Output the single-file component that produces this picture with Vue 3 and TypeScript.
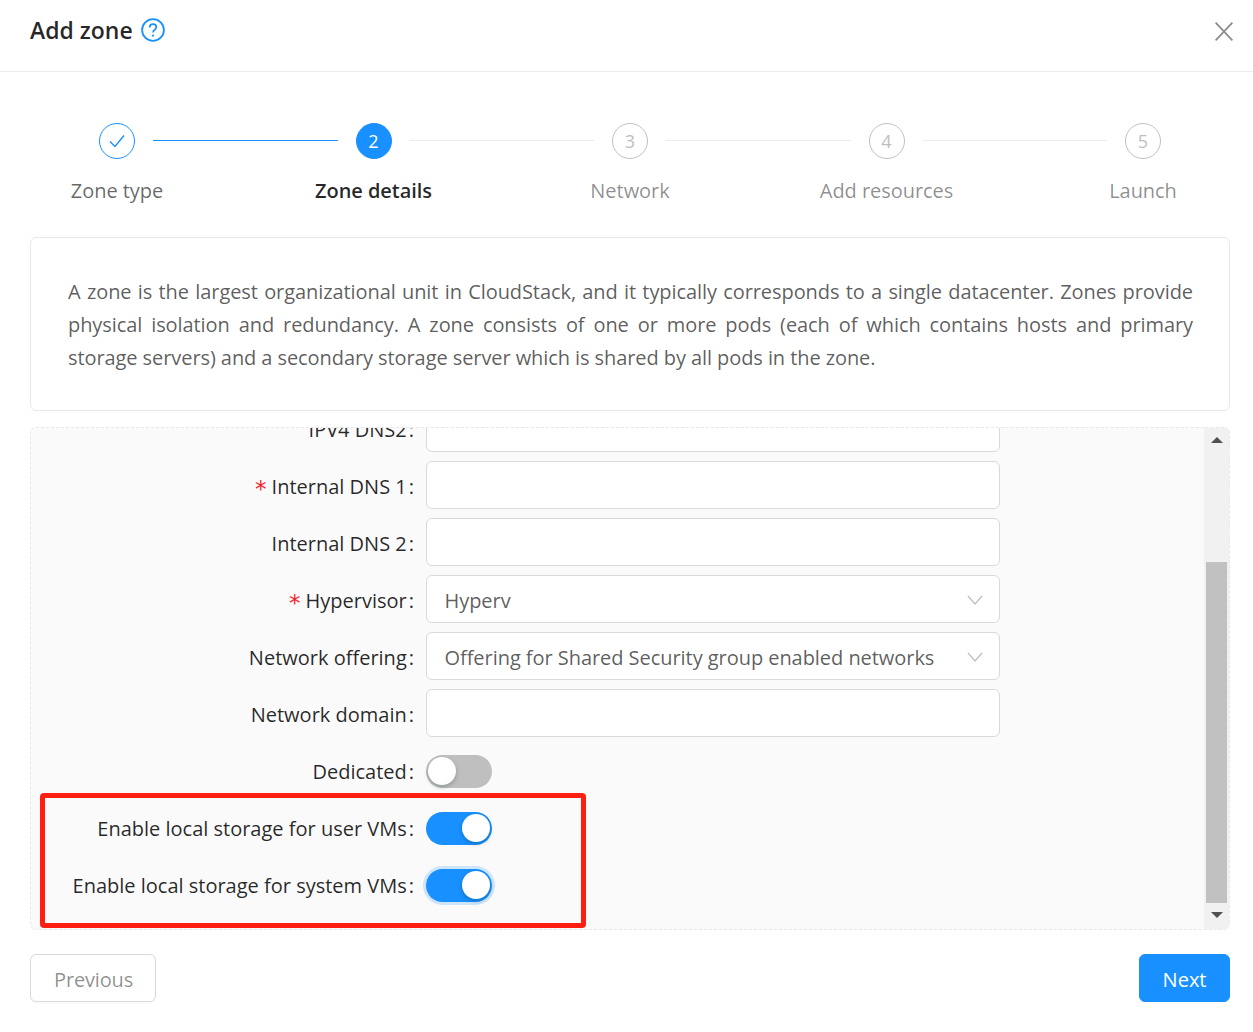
<script setup lang="ts">
interface Step {
  title: string
  state: 'done' | 'active' | 'wait'
}

interface Row {
  label: string
  required?: boolean
  kind: 'input' | 'select' | 'switch'
  value?: string
  on?: boolean
  focused?: boolean
}

const steps: Step[] = [
  { title: 'Zone type', state: 'done' },
  { title: 'Zone details', state: 'active' },
  { title: 'Network', state: 'wait' },
  { title: 'Add resources', state: 'wait' },
  { title: 'Launch', state: 'wait' },
]

const rows: Row[] = [
  { label: 'IPV4 DNS2', kind: 'input' },
  { label: 'Internal DNS 1', required: true, kind: 'input' },
  { label: 'Internal DNS 2', kind: 'input' },
  { label: 'Hypervisor', required: true, kind: 'select', value: 'Hyperv' },
  { label: 'Network offering', kind: 'select', value: 'Offering for Shared Security group enabled networks' },
  { label: 'Network domain', kind: 'input' },
  { label: 'Dedicated', kind: 'switch', on: false },
  { label: 'Enable local storage for user VMs', kind: 'switch', on: true },
  { label: 'Enable local storage for system VMs', kind: 'switch', on: true, focused: true },
]
</script>

<template>
  <div class="modal">
    <header class="head">
      <div class="title">
        Add zone
        <svg class="help" viewBox="0 0 24 24" width="24" height="24">
          <circle cx="12" cy="12" r="10.9" fill="none" stroke="#1890ff" stroke-width="1.8" />
          <path d="M8.7 9.4c0-1.9 1.5-3.2 3.3-3.2s3.3 1.2 3.3 3c0 2.5-3.3 2.6-3.3 5.2" fill="none" stroke="#1890ff" stroke-width="1.7" />
          <circle cx="12" cy="17.6" r="1.1" fill="#1890ff" />
        </svg>
      </div>
      <svg class="close" viewBox="0 0 18 19" width="18" height="19">
        <path d="M.6.6l16.8 17.8M17.4.6L.6 18.4" stroke="#8c8c8c" stroke-width="1.8" fill="none" />
      </svg>
    </header>

    <div class="body">
      <div class="steps">
        <template v-for="(step, i) in steps" :key="step.title">
          <div class="step" :class="step.state">
            <div class="dot">
              <svg v-if="step.state === 'done'" viewBox="0 0 16 14" width="16" height="14">
                <path d="M1 7.5l5 5L15 1.5" stroke="#1890ff" stroke-width="1.4" fill="none" />
              </svg>
              <span v-else>{{ i + 1 }}</span>
            </div>
            <div class="step-title">{{ step.title }}</div>
          </div>
          <div v-if="i < steps.length - 1" class="line" :class="{ passed: step.state === 'done' }"></div>
        </template>
      </div>

      <div class="desc">
        A zone is the largest organizational unit in CloudStack, and it typically corresponds to a single datacenter. Zones provide physical isolation and redundancy. A zone consists of one or more pods (each of which contains hosts and primary storage servers) and a secondary storage server which is shared by all pods in the zone.
      </div>

      <div class="panel">
        <div class="form">
          <div v-for="row in rows" :key="row.label" class="row">
            <label class="label">
              <span v-if="row.required" class="star">*</span>{{ row.label }}<span class="colon">:</span>
            </label>
            <div v-if="row.kind === 'input'" class="field"></div>
            <div v-else-if="row.kind === 'select'" class="field select">
              <span>{{ row.value }}</span>
              <svg viewBox="0 0 16 10" width="16" height="10">
                <path d="M1 1l7 8 7-8" stroke="#bfbfbf" stroke-width="1.3" fill="none" />
              </svg>
            </div>
            <div v-else class="switch" :class="{ on: row.on, focused: row.focused }">
              <span class="knob"></span>
            </div>
          </div>
        </div>

        <div class="scrollbar">
          <span class="arrow up"></span>
          <div class="track"><div class="thumb"></div></div>
          <span class="arrow down"></span>
        </div>

        <div class="highlight"></div>
      </div>

      <footer class="actions">
        <button class="btn">Previous</button>
        <button class="btn primary">Next</button>
      </footer>
    </div>
  </div>
</template>

<style>
body {
  background: #fff;
}
</style>

<style scoped>
.modal {
  width: 1253px;
  height: 1032px;
  font-family: "Open Sans", "Noto Sans", sans-serif;
  font-size: 20px;
  color: rgba(0, 0, 0, 0.85);
  overflow: hidden;
  box-sizing: border-box;
}

.head {
  height: 72px;
  box-sizing: border-box;
  border-bottom: 1px solid #ececec;
  display: flex;
  justify-content: space-between;
  padding: 0 20px 0 30px;
}

.title {
  display: flex;
  align-items: center;
  gap: 8px;
  height: 60px;
  font-size: 23px;
  font-weight: 600;
}

.close {
  margin-top: 22px;
}

.body {
  padding: 51px 23px 0 30px;
}

.steps {
  display: flex;
  padding: 0 69px;
  height: 114px;
}

.step {
  width: 36px;
  display: flex;
  flex-direction: column;
  align-items: center;
  flex-shrink: 0;
}

.dot {
  width: 36px;
  height: 36px;
  box-sizing: border-box;
  border-radius: 50%;
  border: 1px solid #bfbfbf;
  color: #bfbfbf;
  display: flex;
  align-items: center;
  justify-content: center;
  font-size: 18px;
}

.step.done .dot {
  border-color: #1890ff;
}

.step.active .dot {
  background: #1890ff;
  border-color: #1890ff;
  color: #fff;
}

.step-title {
  margin-top: 17px;
  white-space: nowrap;
  line-height: 30px;
  letter-spacing: -0.05px;
  color: rgba(0, 0, 0, 0.45);
}

.step.done .step-title {
  color: rgba(0, 0, 0, 0.6);
}

.step.active .step-title {
  color: rgba(0, 0, 0, 0.85);
  font-weight: 600;
}

.line {
  flex: 1;
  height: 1px;
  margin: 17px 18px 0;
  background: #ebebeb;
}

.line.passed {
  background: #1890ff;
}

.desc {
  height: 174px;
  box-sizing: border-box;
  border: 1px solid #e8e8e8;
  border-radius: 6px;
  padding: 37px 36px 0 37px;
  line-height: 33px;
  letter-spacing: -0.08px;
  text-align: justify;
  color: rgba(0, 0, 0, 0.65);
}

.panel {
  position: relative;
  margin-top: 16px;
  height: 503px;
  box-sizing: border-box;
  display: flex;
  background: #fafafa;
  border: 1px dashed #e8e8e8;
  border-radius: 6px;
  overflow: hidden;
}

.form {
  flex: 1;
  margin-top: -24px;
  display: flex;
  flex-direction: column;
  gap: 9px;
}

.row {
  display: flex;
  align-items: center;
  height: 48px;
}

.label {
  width: 395px;
  padding: 2px 12px 0 0;
  box-sizing: border-box;
  flex-shrink: 0;
  text-align: right;
  white-space: nowrap;
  color: rgba(0, 0, 0, 0.85);
}

.star {
  color: #f5222d;
  margin-right: 5px;
  font-family: "DejaVu Sans", sans-serif;
  font-size: 23px;
  line-height: 0;
  vertical-align: -3px;
}

.colon {
  margin-left: 2px;
}

.field {
  width: 574px;
  height: 48px;
  box-sizing: border-box;
  background: #fff;
  border: 1px solid #d9d9d9;
  border-radius: 6px;
}

.select {
  display: flex;
  align-items: center;
  justify-content: space-between;
  padding: 2px 16px 0 17.5px;
  letter-spacing: -0.05px;
  color: rgba(0, 0, 0, 0.65);
}

.switch {
  width: 66px;
  height: 33px;
  margin-top: 2px;
  border-radius: 17px;
  background: #bfbfbf;
  display: flex;
  align-items: flex-start;
  padding: 2px;
  box-sizing: border-box;
}

.switch.on {
  background: #1890ff;
  justify-content: flex-end;
}

.switch.focused {
  box-shadow: 0 0 0 3px rgba(24, 144, 255, 0.2);
}

.knob {
  width: 28px;
  height: 28px;
  border-radius: 50%;
  background: #fff;
  box-shadow: 0 2px 4px rgba(0, 35, 11, 0.25);
}

.scrollbar {
  width: 25px;
  flex-shrink: 0;
  background: #f1f1f1;
  display: flex;
  flex-direction: column;
  align-items: center;
}

.arrow {
  flex-shrink: 0;
  width: 0;
  height: 0;
  border-left: 6px solid transparent;
  border-right: 6px solid transparent;
}

.arrow.up {
  margin: 9px 0 5px;
  border-bottom: 6px solid #505050;
}

.arrow.down {
  margin: 6px 0 11px;
  border-top: 6px solid #505050;
}

.track {
  flex: 1;
  width: 21px;
  display: flex;
  align-items: flex-end;
}

.thumb {
  width: 21px;
  height: 341px;
  margin-bottom: 3px;
  background: #c1c1c1;
}

.highlight {
  position: absolute;
  left: 9px;
  top: 365px;
  width: 546px;
  height: 135px;
  box-sizing: border-box;
  border: 5px solid #ff1f12;
  border-radius: 4px;
  pointer-events: none;
}

.actions {
  display: flex;
  justify-content: space-between;
  margin-top: 24px;
}

.btn {
  height: 48px;
  box-sizing: border-box;
  font: inherit;
  padding: 2px 22px 0 23px;
  letter-spacing: -0.15px;
  background: #fff;
  border: 1px solid #d9d9d9;
  border-radius: 6px;
  color: rgba(0, 0, 0, 0.45);
  box-shadow: 0 2px 0 rgba(0, 0, 0, 0.015);
}

.btn.primary {
  padding: 2px 22.5px 0 23px;
  letter-spacing: 0;
  background: #1890ff;
  border-color: #1890ff;
  color: #fff;
}
</style>
